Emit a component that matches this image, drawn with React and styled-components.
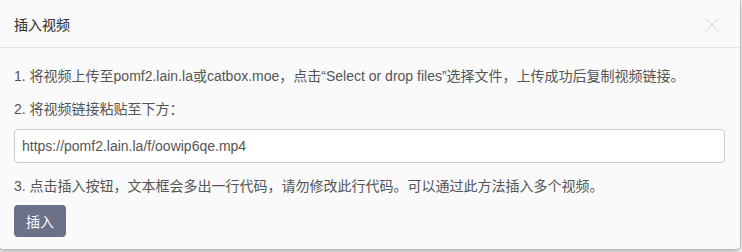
import React from "react";
import styled, { createGlobalStyle } from "styled-components";

const GlobalStyle = createGlobalStyle`
  html, body {
    margin: 0;
    padding: 0;
    background: #ffffff;
  }
  body {
    font-family: "Liberation Sans", "Noto Sans CJK SC", sans-serif;
    font-size: 14px;
    color: #555;
  }
  * { box-sizing: border-box; }
`;

const Page = styled.div`
  width: 742px;
  height: 252px;
  overflow: hidden;
`;

const Modal = styled.div`
  width: 743px;
  height: 250px;
  margin-left: -2px;
  background: #fafafa;
  border: 1px solid rgba(0, 0, 0, 0.25);
  border-top: none;
  border-radius: 0 0 5px 5px;
  box-shadow: 0 3px 9px rgba(0, 0, 0, 0.3);
  display: flex;
  flex-direction: column;
`;

const Header = styled.div`
  display: flex;
  align-items: center;
  justify-content: space-between;
  height: 48px;
  padding: 2px 20px 0 15px;
  border-bottom: 1px solid #e5e5e5;
`;

const Title = styled.h4`
  margin: 0;
  font-size: 14px;
  font-weight: normal;
  line-height: 20px;
  color: #333;
  -webkit-text-stroke: 0.1px #333;
`;

const Close = styled.button`
  border: none;
  background: transparent;
  padding: 0;
  width: 16px;
  height: 16px;
  display: flex;
  cursor: pointer;
`;

const Body = styled.div`
  padding: 17px 15px 12px 15px;
`;

const Step = styled.p`
  margin: 0 0 ${(p) => p.$gap}px;
  line-height: 22px;
  color: #555;
`;

const Input = styled.input`
  display: block;
  width: 100%;
  height: 34px;
  margin: 0 0 12px;
  padding: 6px 7px;
  font-family: inherit;
  font-size: 14px;
  color: #555;
  background: #fff;
  border: 1px solid #ccc;
  border-radius: 4px;
  outline: none;
`;

const Button = styled.button`
  height: 32px;
  padding: 0 12px;
  font-family: inherit;
  font-size: 14px;
  color: #fff;
  background: #6b7188;
  border: none;
  border-radius: 4px;
  cursor: pointer;
`;

export default function App() {
  return (
    <Page>
      <GlobalStyle />
      <Modal>
        <Header>
          <Title>插入视频</Title>
          <Close aria-label="close">
            <svg width="16" height="16" viewBox="0 0 16 16">
              <path d="M1 1 L15 15 M15 1 L1 15" stroke="#e2e2e2" strokeWidth="1.2" fill="none" />
            </svg>
          </Close>
        </Header>
        <Body>
          <Step $gap={11}>
            1. 将视频上传至pomf2.lain.la或catbox.moe，点击“Select or drop files”选择文件，上传成功后复制视频链接。
          </Step>
          <Step $gap={9}>2. 将视频链接粘贴至下方：</Step>
          <Input defaultValue="https://pomf2.lain.la/f/oowip6qe.mp4" />
          <Step $gap={8}>3. 点击插入按钮，文本框会多出一行代码，请勿修改此行代码。可以通过此方法插入多个视频。</Step>
          <Button>插入</Button>
        </Body>
      </Modal>
    </Page>
  );
}
